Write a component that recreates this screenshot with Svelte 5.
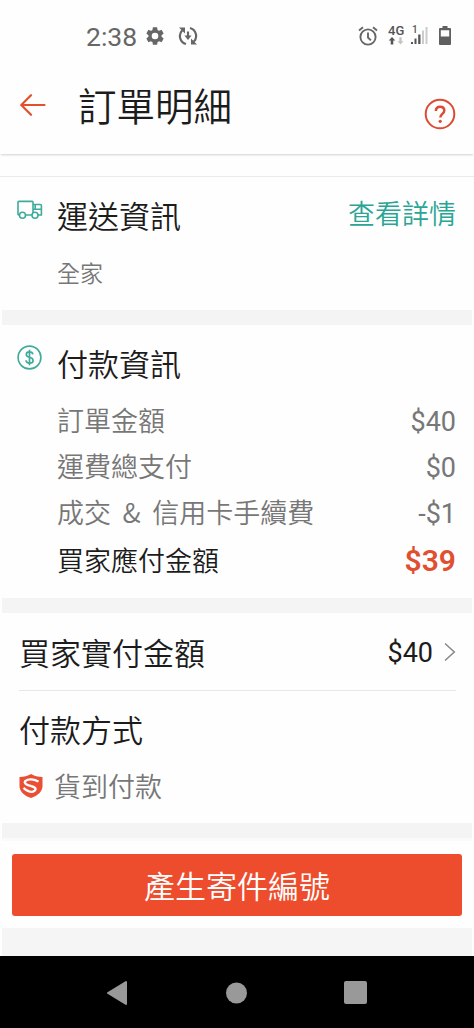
<script lang="ts">
	type Row = { label: string; value: string; total?: boolean };

	const rows: Row[] = [
		{ label: '訂單金額', value: '$40' },
		{ label: '運費總支付', value: '$0' },
		{ label: '成交 & 信用卡手續費', value: '-$1' },
		{ label: '買家應付金額', value: '$39', total: true }
	];
</script>

<div class="screen">
	<div class="status">
		<span class="clock">2:38</span>
		<svg class="gear" width="22" height="22" viewBox="0 0 24 24">
			<path fill="#666" d="M19.14 12.94c.04-.3.06-.61.06-.94s-.02-.64-.07-.94l2.03-1.58a.5.5 0 0 0 .12-.61l-1.92-3.32a.49.49 0 0 0-.59-.22l-2.39.96a7 7 0 0 0-1.62-.94l-.36-2.54a.48.48 0 0 0-.48-.41h-3.84a.47.47 0 0 0-.47.41l-.36 2.54c-.59.24-1.13.57-1.62.94l-2.39-.96a.48.48 0 0 0-.59.22L2.74 8.87a.47.47 0 0 0 .12.61l2.03 1.58a6.6 6.6 0 0 0 0 1.88l-2.03 1.58a.5.5 0 0 0-.12.61l1.92 3.32c.12.22.37.29.59.22l2.39-.96c.5.38 1.03.7 1.62.94l.36 2.54c.05.24.24.41.48.41h3.84c.24 0 .44-.17.47-.41l.36-2.54a7 7 0 0 0 1.62-.94l2.39.96c.22.08.47 0 .59-.22l1.92-3.32a.47.47 0 0 0-.12-.61zM12 15.6a3.6 3.6 0 1 1 0-7.2 3.6 3.6 0 0 1 0 7.2z" />
		</svg>
		<svg class="sync" width="20" height="20" viewBox="0 0 20 20" fill="none" stroke="#666" stroke-width="2.2">
			<path d="M8 18A8.200 8.200 0 0 1 4.300 4.300M12 2a8.200 8.200 0 0 1 3.700 13.700" />
			<path d="M1 1.500h6v6zM19 18.500h-6v-6z" fill="#666" stroke="none" />
			<path d="M10 5.500v5" />
			<path d="M6.400 9.500h7.200L10 14z" fill="#666" stroke="none" />
		</svg>
		<div class="tray">
			<svg width="20" height="20" viewBox="0 0 20 20" fill="none" stroke="#666" stroke-width="1.900">
				<circle cx="10" cy="11" r="7.600" />
				<path d="M10 6.500v5l2.900 2.900M1 4.400 5 1.200M19 4.400 15 1.200" />
			</svg>
			<div class="mobile">
				<span>4G</span>
				<svg width="16" height="8" viewBox="0 0 16 8">
					<path fill="#555" d="M4 0l3.300 3.500H5.300V7.500H2.700V3.500H.7z" />
					<path fill="#c4c4c4" d="M12.500 7.500 9.500 4.300h1.800V.3h2.400v4h1.800z" />
				</svg>
			</div>
			<div class="signal">
				<span>1</span>
				<svg width="17" height="19" viewBox="0 0 17 19">
					<path fill="#555" d="M0 16h2v2H0zM3.500 12.500h2V18h-2zM7.200 8.500h2.300V18H7.200z" />
					<path fill="#ccc" d="M11 4.500h2V18h-2zM14.500 1h2v17h-2z" />
				</svg>
			</div>
			<svg class="battery" width="12" height="20" viewBox="0 0 12 20">
				<path fill="#606060" fill-rule="evenodd" d="M3.500 0h5v2H11a1 1 0 0 1 1 1v15a1 1 0 0 1-1 1H1a1 1 0 0 1-1-1V3a1 1 0 0 1 1-1h2.500zM1.800 4.200v6.300h8.400V4.200z" />
			</svg>
		</div>
	</div>

	<header>
		<svg class="back" width="26" height="22" viewBox="0 0 26 22" fill="none" stroke="#e2502e" stroke-width="2.200" stroke-linecap="round" stroke-linejoin="round">
			<path d="M24.500 11H1.500M11 1.200 1.300 11l9.700 9.800" />
		</svg>
		<h1>訂單明細</h1>
		<svg class="help" width="32" height="32" viewBox="0 0 32 32" fill="none" stroke="#dc4c32">
			<circle cx="16" cy="16" r="14.300" stroke-width="2" />
			<path stroke-width="2.500" d="M11.900 13c0-2.700 1.700-4.300 4.200-4.300s4.200 1.500 4.200 3.800c0 3.300-4 3.500-4 7" />
			<circle cx="16.200" cy="23.300" r="1.600" fill="#dc4c32" stroke="none" />
		</svg>
	</header>
	<div class="spacer"></div>

	<section class="shipping">
		<svg class="icon" width="26" height="20" viewBox="0 0 26 20" fill="none" stroke="#3fab9c" stroke-width="1.600">
			<path d="M2.600 15H1.800c-.5 0-.8-.3-.8-.8V2.200c0-.5.300-.8.800-.8h13.400c.5 0 .8.300.8.800V15M8.300 15h7M16 4.500h7.500c.6 0 .9.300.9.900V15h-3.600M18.200 4.500v4.800h6.200M16 9.300h8.400" />
			<circle cx="5.500" cy="15.200" r="3" fill="#fefefe" />
			<circle cx="18" cy="15.200" r="3" fill="#fefefe" />
		</svg>
		<div class="body">
			<h2>運送資訊</h2>
			<p>全家</p>
		</div>
		<a class="detail" href="#detail">查看詳情</a>
	</section>

	<section class="payment">
		<svg class="icon" width="25" height="25" viewBox="0 0 25 25" fill="none" stroke="#42aa9c">
			<circle cx="12.500" cy="12.500" r="11.400" stroke-width="1.600" />
			<path stroke-width="1.700" d="M15.800 9.300c-.2-1.600-1.500-2.500-3.300-2.500s-3.200 1-3.200 2.600c0 3.800 6.800 2 6.800 6 0 1.700-1.500 2.700-3.500 2.700s-3.500-1-3.600-2.800M12.500 4.800v15.400" />
		</svg>
		<div class="body">
			<h2>付款資訊</h2>
			{#each rows as row}
				<div class="row" class:total={row.total}>
					<span class="label">{row.label}</span>
					<span class="amount">{row.value}</span>
				</div>
			{/each}
		</div>
	</section>

	<section class="paid">
		<div class="actual">
			<h2>買家實付金額</h2>
			<span class="amount">$40</span>
			<svg width="12" height="20" viewBox="0 0 12 20" fill="none" stroke="#888" stroke-width="1.500">
				<path d="M1 1.500 10.300 10 1 18.500" />
			</svg>
		</div>
		<div class="method">
			<h2>付款方式</h2>
			<div class="cod">
				<svg width="24" height="24" viewBox="0 0 24 24">
					<path fill="#ea4f35" d="M12 0c3.200 2 7 3 11.500 3v9c0 5.500-4.500 9.600-11.500 12C5 21.600.5 17.500.5 12V3C5 3 8.800 2 12 0z" />
					<path fill="none" stroke="#fff" stroke-width="2.300" d="M19.500 7.600C15.500 5 9.500 4.400 6.500 6.800c-2 2.400.8 4 5 5.100 4.200 1.200 6.500 2.300 4.200 4.700-2.500 2.200-7 .8-11.200-2.800" />
				</svg>
				<span>貨到付款</span>
			</div>
		</div>
	</section>

	<footer>
		<button>產生寄件編號</button>
	</footer>

	<nav>
		<svg width="22" height="26" viewBox="0 0 22 26">
			<path fill="#999" stroke="#999" stroke-width="2" stroke-linejoin="round" d="M2 13 20 2v22z" />
		</svg>
		<svg width="22" height="22" viewBox="0 0 22 22"><circle cx="11.500" cy="11" r="10.500" fill="#999" /></svg>
		<svg width="23" height="23" viewBox="0 0 23 23"><rect width="23" height="23" rx="2" fill="#999" /></svg>
	</nav>
</div>

<style>
	:global(body) {
		background: #fefefe;
	}

	.screen {
		width: 474px;
		height: 1028px;
		display: flex;
		flex-direction: column;
		overflow: hidden;
		box-sizing: border-box;
		background: #fefefe;
		color: #1c1c1c;
		font-family: "Noto Sans CJK TC", sans-serif;
		font-weight: 350;
	}

	h1, h2, p {
		margin: 0;
		font-weight: inherit;
	}

	svg {
		display: block;
		flex: none;
	}

	.status {
		height: 73px;
		box-sizing: border-box;
		display: flex;
		align-items: center;
		padding: 0 23px 0 86px;
	}

	.clock {
		font: 400 26.5px/30px Roboto, sans-serif;
		color: #666;
		width: 52px;
	}

	.gear { margin-left: 6px; margin-top: -2px; }
	.sync { margin-left: 12px; margin-top: -2px; }

	.tray {
		margin-left: auto;
		margin-top: -2px;
		display: flex;
		align-items: center;
		color: #555;
		font: 500 13px/10px Roboto, sans-serif;
	}

	.mobile {
		width: 17px;
		margin-left: 10px;
	}

	.mobile span { display: block; }
	.mobile svg { margin-top: 1px; }

	.signal {
		display: grid;
		margin-left: 6px;
	}

	.signal span, .signal svg { grid-area: 1 / 1; }
	.signal span { font-size: 10px; line-height: 8px; padding-left: 1px; }
	.battery { margin-left: 11px; }

	header {
		height: 81px;
		box-sizing: border-box;
		display: flex;
		align-items: center;
		padding: 0 18px 0 20px;
		box-shadow: 0 2px 2px -1px rgba(0, 0, 0, 0.18);
	}

	.back { margin-top: -18px; }

	h1 {
		flex: 1;
		margin-left: 32px;
		margin-top: -20px;
		font-size: 38.5px;
		line-height: 50px;
	}

	.help { margin-top: 1px; }

	.spacer {
		height: 22px;
		border-bottom: 1px solid #ebebeb;
	}

	section {
		margin: 0 2px;
		border-bottom: 15px solid #f4f4f4;
		box-sizing: border-box;
	}

	h2 {
		font-size: 31px;
		line-height: 40px;
	}

	.shipping {
		height: 148px;
		display: flex;
		padding: 18px 16px 0 15px;
	}

	.shipping .icon { margin-top: 5px; }

	.body {
		flex: 1;
		margin-left: 14px;
	}

	.shipping p {
		margin-top: 22px;
		font-size: 23px;
		line-height: 30px;
		color: #777;
	}

	.detail {
		font-size: 27px;
		line-height: 34px;
		margin-top: 1px;
		color: #2aa595;
		text-decoration: none;
	}

	.payment {
		height: 288px;
		display: flex;
		padding: 18px 16px 0 15px;
	}

	.payment .icon { margin-top: 2px; }
	.payment .body { margin-left: 15px; }

	.row {
		display: flex;
		justify-content: space-between;
		height: 46px;
		align-items: center;
		font-size: 27px;
		line-height: 40px;
		color: #777;
	}

	h2 + .row { margin-top: 14px; }

	.label { word-spacing: 5.5px; }

	.amount {
		padding-top: 3px;
		font-family: Roboto, sans-serif;
		font-weight: 400;
		font-size: 27px;
	}

	.total {
		color: #1c1c1c;
		margin-top: 2px;
	}

	.total .amount {
		padding-top: 2px;
		font-size: 30px;
		font-weight: 600;
		color: #e05030;
	}

	.paid { height: 225px; }

	.actual {
		height: 78px;
		box-sizing: border-box;
		display: flex;
		align-items: center;
		margin: 0 16px 0 17px;
		border-bottom: 1px solid #e6e6e6;
	}

	.actual .amount { margin-left: auto; }
	.actual svg { margin-left: 11px; }

	.method { padding: 18px 17px 0; }

	.cod {
		display: flex;
		align-items: center;
		gap: 11px;
		margin-top: 17px;
		font-size: 27px;
		line-height: 40px;
		color: #777;
	}

	footer {
		height: 118px;
		box-sizing: border-box;
		margin: 0 2px;
		padding: 13px 10px 0;
		border-top: 3px solid #fafafa;
		border-bottom: 28px solid #f5f5f5;
	}

	button {
		display: block;
		width: 100%;
		height: 62px;
		padding: 0 0 1px;
		border: 0;
		border-radius: 3px;
		background: #ee4d2d;
		color: #fff;
		font: inherit;
		font-size: 31px;
	}

	nav {
		flex: 1;
		display: flex;
		align-items: center;
		justify-content: space-between;
		padding: 1px 107px 0 106px;
		background: #000;
	}
</style>
